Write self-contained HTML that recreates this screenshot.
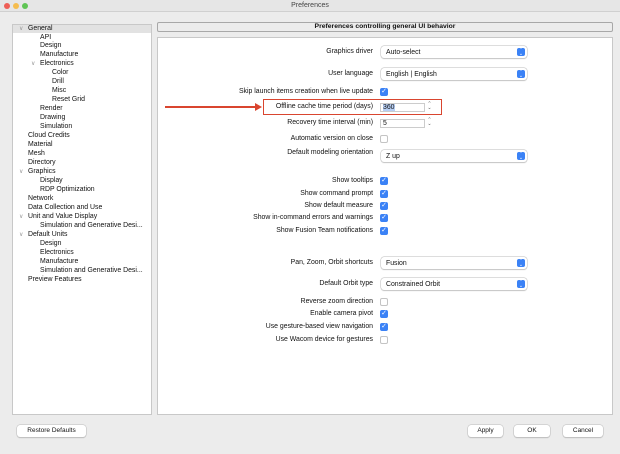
<!DOCTYPE html>
<html><head><style>
*{margin:0;padding:0;box-sizing:border-box}
body{width:620px;height:454px;background:#ececec;font-family:"Liberation Sans",sans-serif;font-size:6.9px;color:#111;position:relative;overflow:hidden}
.a{position:absolute;white-space:nowrap}
.title{left:0;top:0;width:620px;height:12px;background:#e6e6e6;border-bottom:1px solid #d0d0d0;text-align:center;line-height:11px;color:#444;font-size:7px}
.dot{position:absolute;top:3px;width:6px;height:6px;border-radius:50%}
.tree{left:12px;top:24px;width:140px;height:391px;background:#fff;border:1px solid #c8c8c8}
.sel{left:13px;top:25px;width:138px;height:8px;background:#e2e2e2}
.t{position:absolute;line-height:8px;white-space:nowrap}
.chev{position:absolute;font-size:6px;color:#999;line-height:8px}
.panel{left:157px;top:37px;width:456px;height:378px;background:#fff;border:1px solid #c8c8c8}
.hdr{left:157px;top:22px;width:456px;height:10px;background:#ececec;border:1px solid #a8a8a8;border-radius:2px;text-align:center;font-weight:bold;line-height:8px;font-size:6.8px}
.lbl{position:absolute;right:247px;line-height:8px;text-align:right;white-space:nowrap}
.cb{position:absolute;left:380px;width:8px;height:8px;border-radius:2px;background:#3b82f6;color:#fff;font-size:7px;line-height:8px;text-align:center}
.cb.off{background:#fff;border:1px solid #c4c4c4}
.dd{position:absolute;left:381px;width:146px;height:12px;background:#fff;border-radius:3px;box-shadow:0 0 0 .5px #bbb,0 1px 1px #ccc;line-height:13px;padding-left:5px}
.dd i{position:absolute;right:2px;top:2px;width:8px;height:8px;background:#3b82f6;border-radius:2px;color:#fff;font-style:normal;font-size:5px;line-height:4px;text-align:center}
.sp{position:absolute;left:380px;width:45px;height:9px;background:#fff;border:1px solid #ccc;line-height:8px;padding-left:2px}
.arr{position:absolute;left:427px;font-size:5px;line-height:4px;color:#555;text-align:center;width:5px}
.btn{position:absolute;top:425px;height:12px;background:#fff;border-radius:3px;box-shadow:0 0 0 .5px #bbb,0 1px 1px #bbb;text-align:center;line-height:12px;font-size:6.5px}
</style></head><body>
<div class="a title">Preferences</div>
<div class="dot" style="left:4px;background:#ee5f57"></div>
<div class="dot" style="left:13px;background:#f5bd4f"></div>
<div class="dot" style="left:22px;background:#5fc454"></div>
<div class="a tree"></div>
<div class="a sel"></div>
<div class="chev" style="left:19px;top:25px">&#8744;</div>
<div class="t" style="left:28px;top:25px">General</div>
<div class="t" style="left:40px;top:34px">API</div>
<div class="t" style="left:40px;top:42px">Design</div>
<div class="t" style="left:40px;top:51px">Manufacture</div>
<div class="chev" style="left:31px;top:60px">&#8744;</div>
<div class="t" style="left:40px;top:60px">Electronics</div>
<div class="t" style="left:52px;top:69px">Color</div>
<div class="t" style="left:52px;top:78px">Drill</div>
<div class="t" style="left:52px;top:87px">Misc</div>
<div class="t" style="left:52px;top:96px">Reset Grid</div>
<div class="t" style="left:40px;top:105px">Render</div>
<div class="t" style="left:40px;top:114px">Drawing</div>
<div class="t" style="left:40px;top:123px">Simulation</div>
<div class="t" style="left:28px;top:132px">Cloud Credits</div>
<div class="t" style="left:28px;top:141px">Material</div>
<div class="t" style="left:28px;top:150px">Mesh</div>
<div class="t" style="left:28px;top:159px">Directory</div>
<div class="chev" style="left:19px;top:168px">&#8744;</div>
<div class="t" style="left:28px;top:168px">Graphics</div>
<div class="t" style="left:40px;top:177px">Display</div>
<div class="t" style="left:40px;top:186px">RDP Optimization</div>
<div class="t" style="left:28px;top:195px">Network</div>
<div class="t" style="left:28px;top:204px">Data Collection and Use</div>
<div class="chev" style="left:19px;top:213px">&#8744;</div>
<div class="t" style="left:28px;top:213px">Unit and Value Display</div>
<div class="t" style="left:40px;top:222px">Simulation and Generative Desi...</div>
<div class="chev" style="left:19px;top:231px">&#8744;</div>
<div class="t" style="left:28px;top:231px">Default Units</div>
<div class="t" style="left:40px;top:240px">Design</div>
<div class="t" style="left:40px;top:249px">Electronics</div>
<div class="t" style="left:40px;top:258px">Manufacture</div>
<div class="t" style="left:40px;top:267px">Simulation and Generative Desi...</div>
<div class="t" style="left:28px;top:276px">Preview Features</div>

<div class="a hdr">Preferences controlling general UI behavior</div>
<div class="a panel"></div>

<div class="lbl" style="top:48px">Graphics driver</div><div class="dd" style="top:46px">Auto-select<i>&#8963;<br>&#8964;</i></div>
<div class="lbl" style="top:70px">User language</div><div class="dd" style="top:68px">English | English<i>&#8963;<br>&#8964;</i></div>
<div class="lbl" style="top:88px">Skip launch items creation when live update</div><div class="cb" style="top:88px">&#10003;</div>
<div class="a" style="left:263px;top:99px;width:179px;height:16px;border:1.5px solid #d9452f"></div>
<div class="a" style="left:165px;top:106px;width:92px;height:1.5px;background:#d9452f"></div>
<div class="a" style="left:255px;top:103px;width:0;height:0;border-left:7px solid #d9452f;border-top:4px solid transparent;border-bottom:4px solid transparent"></div>
<div class="lbl" style="top:103px">Offline cache time period (days)</div><div class="sp" style="top:103px"><span style="background:#b7cff5">360</span></div><div class="arr" style="top:102px">&#8963;<br>&#8964;</div>
<div class="lbl" style="top:119px">Recovery time interval (min)</div><div class="sp" style="top:119px">5</div><div class="arr" style="top:118px">&#8963;<br>&#8964;</div>
<div class="lbl" style="top:135px">Automatic version on close</div><div class="cb off" style="top:135px"></div>
<div class="lbl" style="top:149px">Default modeling orientation</div><div class="dd" style="top:150px">Z up<i>&#8963;<br>&#8964;</i></div>
<div class="lbl" style="top:177px">Show tooltips</div><div class="cb" style="top:177px">&#10003;</div>
<div class="lbl" style="top:190px">Show command prompt</div><div class="cb" style="top:190px">&#10003;</div>
<div class="lbl" style="top:202px">Show default measure</div><div class="cb" style="top:202px">&#10003;</div>
<div class="lbl" style="top:214px">Show in-command errors and warnings</div><div class="cb" style="top:214px">&#10003;</div>
<div class="lbl" style="top:227px">Show Fusion Team notifications</div><div class="cb" style="top:227px">&#10003;</div>
<div class="lbl" style="top:259px">Pan, Zoom, Orbit shortcuts</div><div class="dd" style="top:257px">Fusion<i>&#8963;<br>&#8964;</i></div>
<div class="lbl" style="top:280px">Default Orbit type</div><div class="dd" style="top:278px">Constrained Orbit<i>&#8963;<br>&#8964;</i></div>
<div class="lbl" style="top:298px">Reverse zoom direction</div><div class="cb off" style="top:298px"></div>
<div class="lbl" style="top:310px">Enable camera pivot</div><div class="cb" style="top:310px">&#10003;</div>
<div class="lbl" style="top:323px">Use gesture-based view navigation</div><div class="cb" style="top:323px">&#10003;</div>
<div class="lbl" style="top:336px">Use Wacom device for gestures</div><div class="cb off" style="top:336px"></div>

<div class="btn" style="left:17px;width:69px">Restore Defaults</div>
<div class="btn" style="left:468px;width:35px">Apply</div>
<div class="btn" style="left:514px;width:36px">OK</div>
<div class="btn" style="left:563px;width:40px">Cancel</div>
</body></html>
